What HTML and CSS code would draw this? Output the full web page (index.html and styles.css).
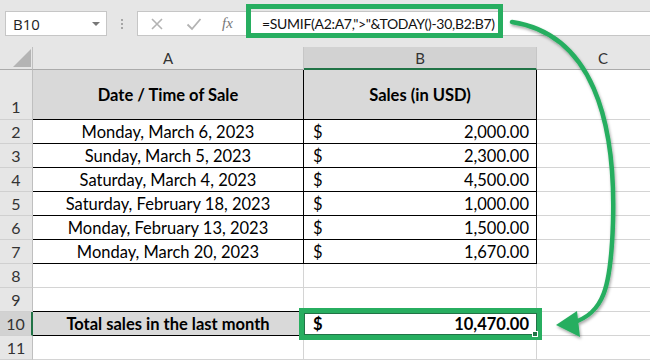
FILE: index.html
```html
<!DOCTYPE html>
<html lang="en">
<head>
    <meta charset="UTF-8">
    <title>SUMIF last month</title>
    <link rel="stylesheet" href="styles.css">
</head>
<body>

    <!-- formula bar -->
    <div class="topbar">
        <div class="name_box">
            <span>B10</span>
            <span class="drop"></span>
        </div>
        <div class="grip">
            <i></i><i></i><i></i>
        </div>
        <div class="fx_bar">
            <div class="fx_icons">
                <svg width="14" height="14" viewBox="0 0 14 14"><path d="M2 2 L12 12 M12 2 L2 12" stroke="#b3b3b3" stroke-width="1.6" fill="none"/></svg>
                <svg width="16" height="14" viewBox="0 0 16 14"><path d="M1.5 7.5 L6 12 L14.5 2" stroke="#b3b3b3" stroke-width="1.8" fill="none"/></svg>
                <span class="fx">fx</span>
            </div>
            <div class="formula">=SUMIF(A2:A7,"&gt;"&amp;TODAY()-30,B2:B7)</div>
        </div>
    </div>

    <!-- sheet -->
    <div class="sheet">
        <div class="corner"><span class="tri"></span></div>
        <div class="colhead">A</div>
        <div class="colhead sel">B</div>
        <div class="colhead">C</div>

        <div class="rh bottom">1</div>
        <div class="c tb hd">Date / Time of Sale</div>
        <div class="c tb hd">Sales (in USD)</div>
        <div class="c"></div>

        <div class="rh">2</div>
        <div class="c tb">Monday, March 6, 2023</div>
        <div class="c tb num"><span>$</span><span>2,000.00</span></div>
        <div class="c"></div>

        <div class="rh">3</div>
        <div class="c tb">Sunday, March 5, 2023</div>
        <div class="c tb num"><span>$</span><span>2,300.00</span></div>
        <div class="c"></div>

        <div class="rh">4</div>
        <div class="c tb">Saturday, March 4, 2023</div>
        <div class="c tb num"><span>$</span><span>4,500.00</span></div>
        <div class="c"></div>

        <div class="rh">5</div>
        <div class="c tb">Saturday, February 18, 2023</div>
        <div class="c tb num"><span>$</span><span>1,000.00</span></div>
        <div class="c"></div>

        <div class="rh">6</div>
        <div class="c tb">Monday, February 13, 2023</div>
        <div class="c tb num"><span>$</span><span>1,500.00</span></div>
        <div class="c"></div>

        <div class="rh">7</div>
        <div class="c tb">Monday, March 20, 2023</div>
        <div class="c tb num"><span>$</span><span>1,670.00</span></div>
        <div class="c"></div>

        <div class="rh">8</div>
        <div class="c"></div>
        <div class="c"></div>
        <div class="c"></div>

        <div class="rh">9</div>
        <div class="c under"></div>
        <div class="c under"></div>
        <div class="c"></div>

        <div class="rh sel">10</div>
        <div class="c tb hd">Total sales in the last month</div>
        <div class="c tb num bold active"><span>$</span><span>10,470.00</span></div>
        <div class="c"></div>

        <div class="rh">11</div>
        <div class="c"></div>
        <div class="c"></div>
        <div class="c"></div>
    </div>

    <!-- callout arrow -->
    <svg class="arrow" width="650" height="360" viewBox="0 0 650 360">
        <defs>
            <filter id="shadow" x="-20%" y="-20%" width="140%" height="140%">
                <feDropShadow dx="1" dy="2" stdDeviation="1.5" flood-color="#000" flood-opacity="0.35"/>
            </filter>
        </defs>
        <g filter="url(#shadow)">
            <path d="M512 22 C592 34 616 120 613 222 C611 288 604 313 572 323" stroke="#27ae60" stroke-width="4.5" fill="none" stroke-linecap="round"/>
            <polygon points="556,325 577,311 580,337" fill="#27ae60"/>
        </g>
    </svg>

</body>
</html>
```

FILE: styles.css
```css
body
{
    margin: 0;
    width: 650px;
    height: 360px;
    overflow: hidden;
    position: relative;
    background: #fff;
    font-family: 'Lato', 'Liberation Sans', sans-serif;
}

/* formula bar */
.topbar
{
    height: 47px;
    background: #e6e6e6;
    display: flex;
    align-items: flex-start;
    padding-top: 11px;
    box-sizing: border-box;
}
.name_box
{
    margin-left: 5px;
    width: 102px;
    height: 25px;
    box-sizing: border-box;
    background: #fff;
    border: 1px solid #c6c6c6;
    display: flex;
    align-items: center;
    justify-content: space-between;
    padding: 0 6px 0 7px;
    font-family: 'Open Sans', sans-serif;
    font-size: 15px;
    color: #222;
}
.drop
{
    width: 0;
    height: 0;
    border-left: 4px solid transparent;
    border-right: 4px solid transparent;
    border-top: 4px solid #777;
}
.grip
{
    width: 30px;
    height: 25px;
    display: flex;
    flex-direction: column;
    align-items: center;
    justify-content: center;
    gap: 2px;
}
.grip i
{
    width: 2px;
    height: 2px;
    background: #a6a6a6;
}
.fx_bar
{
    flex: 1;
    height: 25px;
    background: #fff;
    border: 1px solid #c6c6c6;
    border-right: none;
    box-sizing: border-box;
    display: flex;
    align-items: center;
}
.fx_icons
{
    width: 108px;
    display: flex;
    align-items: center;
    padding-left: 12px;
    box-sizing: border-box;
}
.fx_icons svg:first-child
{
    margin-right: 22px;
}
.fx_icons svg:nth-child(2)
{
    margin-right: 20px;
}
.fx
{
    font-family: 'Liberation Serif', serif;
    font-style: italic;
    font-size: 15px;
    color: #777;
}
.formula
{
    position: relative;
    padding-left: 16px;
    font-size: 14px;
    color: #111;
    letter-spacing: -0.3px;
}
.formula::after
{
    content: '';
    position: absolute;
    left: 0;
    top: -11px;
    width: 257px;
    height: 34px;
    box-sizing: border-box;
    border: 5px solid #27ae60;
}

/* sheet grid */
.sheet
{
    display: grid;
    grid-template-columns: 33px 271px 233px 133px;
    grid-template-rows: 23px 50px repeat(10, 24px);
    font-size: 16.5px;
    color: #000;
}
.sheet > div
{
    box-sizing: border-box;
}
.corner
{
    background: #e6e6e6;
    border-right: 1px solid #bfbfbf;
    border-bottom: 1px solid #ababab;
    position: relative;
}
.tri
{
    position: absolute;
    right: 1px;
    bottom: 2px;
    width: 0;
    height: 0;
    border-left: 18px solid transparent;
    border-bottom: 18px solid #b4b4b4;
}
.colhead
{
    background: #e6e6e6;
    border-right: 1px solid #c6c6c6;
    border-bottom: 1px solid #ababab;
    display: flex;
    align-items: center;
    justify-content: center;
    color: #333;
    font-size: 15px;
}
.colhead.sel
{
    background: #d2d2d2;
    border-bottom: 2px solid #217346;
}
.rh
{
    background: #e6e6e6;
    border-right: 1px solid #bfbfbf;
    border-bottom: 1px solid #d0d0d0;
    display: flex;
    align-items: center;
    justify-content: center;
    color: #333;
    font-size: 16px;
}
.rh.bottom
{
    align-items: flex-end;
    padding-bottom: 3px;
}
.rh.sel
{
    background: #d2d2d2;
    border-right: 2px solid #217346;
}
.c
{
    border-right: 1px solid #d4d4d4;
    border-bottom: 1px solid #d4d4d4;
    display: flex;
    align-items: center;
    justify-content: center;
    white-space: nowrap;
}
.c.tb
{
    border-right-color: #000;
    border-bottom-color: #000;
}
.c.under
{
    border-bottom-color: #000;
}
.c.hd
{
    background: #d9d9d9;
    font-weight: bold;
}
.c.num
{
    justify-content: space-between;
    padding: 0 7px 0 9px;
}
.c.bold
{
    font-weight: bold;
}
.c.active
{
    position: relative;
    background: #fff;
}
.c.active::after
{
    content: '';
    position: absolute;
    left: -5px;
    top: -4px;
    right: -6px;
    bottom: -5px;
    border: 5px solid #27ae60;
    box-shadow: inset 0 0 0 1px #217346;
}
.c.active::before
{
    content: '';
    position: absolute;
    right: -2px;
    bottom: -2px;
    width: 4px;
    height: 4px;
    background: #217346;
    border: 1px solid #fff;
    z-index: 1;
}

/* callout */
.arrow
{
    position: absolute;
    left: 0;
    top: 0;
    pointer-events: none;
}
```
